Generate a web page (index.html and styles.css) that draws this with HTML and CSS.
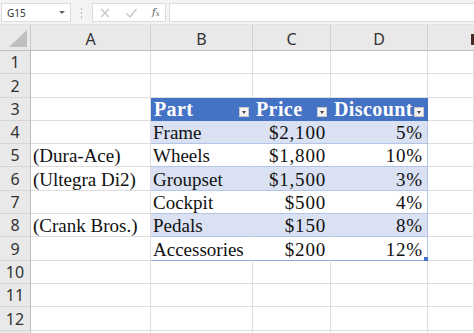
FILE: index.html
```html
<!DOCTYPE html>
<html>
<head>
<meta charset="utf-8">
<link rel="stylesheet" href="styles.css">
</head>
<body>
<div class="toolbar">
  <div class="namebox"><span class="nb-text">G15</span><span class="nb-arrow"></span></div>
  <div class="dots"><i></i><i></i><i></i></div>
  <div class="fbtns">
    <svg class="ico" width="12" height="12" viewBox="0 0 12 12"><path d="M2 2L10 10M10 2L2 10" stroke="#c4c4c4" stroke-width="1.3" fill="none"/></svg>
    <svg class="ico" width="13" height="12" viewBox="0 0 13 12"><path d="M1.5 6.5L5 10L11.5 2" stroke="#c4c4c4" stroke-width="1.3" fill="none"/></svg>
    <span class="fx">f<sub>x</sub></span>
  </div>
  <div class="formula"></div>
</div>
<div class="sheet">
  <div class="corner"><span class="tri"></span></div>
  <div class="ch">A</div><div class="ch">B</div><div class="ch">C</div><div class="ch">D</div><div class="ch ch-e"><span class="ecut"></span></div>

  <div class="rh">1</div><div class="c"></div><div class="c"></div><div class="c"></div><div class="c"></div><div class="c"></div>
  <div class="rh">2</div><div class="c"></div><div class="c"></div><div class="c"></div><div class="c"></div><div class="c"></div>

  <div class="rh">3</div><div class="c"></div>
  <div class="c th">Part<span class="flt"></span></div>
  <div class="c th">Price<span class="flt"></span></div>
  <div class="c th">Discount<span class="flt"></span></div>
  <div class="c"></div>

  <div class="rh">4</div><div class="c"></div>
  <div class="c t band">Frame</div><div class="c t band r">$2,100</div><div class="c t band r last">5%</div><div class="c"></div>

  <div class="rh">5</div><div class="c s">(Dura-Ace)</div>
  <div class="c t">Wheels</div><div class="c t r">$1,800</div><div class="c t r last">10%</div><div class="c"></div>

  <div class="rh">6</div><div class="c s">(Ultegra Di2)</div>
  <div class="c t band">Groupset</div><div class="c t band r">$1,500</div><div class="c t band r last">3%</div><div class="c"></div>

  <div class="rh">7</div><div class="c"></div>
  <div class="c t">Cockpit</div><div class="c t r">$500</div><div class="c t r last">4%</div><div class="c"></div>

  <div class="rh">8</div><div class="c s">(Crank Bros.)</div>
  <div class="c t band">Pedals</div><div class="c t band r">$150</div><div class="c t band r last">8%</div><div class="c"></div>

  <div class="rh">9</div><div class="c"></div>
  <div class="c t bottom">Accessories</div><div class="c t r bottom">$200</div><div class="c t r last bottom">12%<span class="handle"></span></div><div class="c"></div>

  <div class="rh">10</div><div class="c"></div><div class="c"></div><div class="c"></div><div class="c"></div><div class="c"></div>
  <div class="rh">11</div><div class="c"></div><div class="c"></div><div class="c"></div><div class="c"></div><div class="c"></div>
  <div class="rh">12</div><div class="c"></div><div class="c"></div><div class="c"></div><div class="c"></div><div class="c"></div>
  <div class="rh rh-end"></div><div class="c"></div><div class="c"></div><div class="c"></div><div class="c"></div><div class="c"></div>
</div>
</body>
</html>
```
FILE: styles.css
```css
* { box-sizing: border-box; }
html, body { margin: 0; padding: 0; }
body {
  width: 474px; height: 333px; overflow: hidden;
  background: #fff;
  font-family: "Noto Sans", "DejaVu Sans", sans-serif;
}
.toolbar {
  height: 25px;
  background: #f3f3f3;
  display: flex;
  align-items: flex-start;
  padding-top: 3px;
  padding-left: 1px;
  border-bottom: 1px solid #e2e2e2;
}
.namebox {
  width: 70px; height: 19px;
  background: #fff;
  border: 1px solid #dcdcdc;
  display: flex; align-items: center; justify-content: space-between;
  padding: 0 5px 0 5px;
  font-size: 10px; color: #333;
}
.nb-arrow {
  width: 0; height: 0;
  border-left: 3px solid transparent; border-right: 3px solid transparent;
  border-top: 3px solid #666;
}
.dots {
  width: 21px; height: 19px;
  display: flex; flex-direction: column; align-items: center; justify-content: center; gap: 2px;
}
.dots i { display: block; width: 1px; height: 2px; background: #b8b8b8; }
.fbtns {
  width: 74px; height: 19px;
  background: #fff;
  border: 1px solid #dcdcdc;
  display: flex; align-items: center;
  padding-left: 6px;
  gap: 14px;
}
.ico { display: block; }
.fx {
  font-family: "DejaVu Serif", serif; font-style: italic;
  font-size: 10px; color: #555; line-height: 1;
}
.fx sub { font-size: 7px; vertical-align: -1px; }
.formula {
  flex: 1; height: 19px; margin-left: 3px;
  background: #fff;
  border: 1px solid #dcdcdc;
  border-right: none;
}
.sheet {
  display: grid;
  grid-template-columns: 31px 120px 102px 78px 97px 1fr;
  grid-template-rows: 26px repeat(12, 23.3px) 10px;
  height: 308px;
  overflow: hidden;
}
.corner {
  background: #e9e9e9;
  border-right: 1px solid #c8c8c8;
  border-bottom: 1px solid #bdbdbd;
  position: relative;
}
.tri {
  position: absolute; right: 3px; bottom: 3px;
  width: 0; height: 0;
  border-left: 18px solid transparent;
  border-bottom: 17px solid #bfbfbf;
}
.ch {
  background: #e9e9e9;
  border-right: 1px solid #d0d0d0;
  border-bottom: 1px solid #bdbdbd;
  display: flex; align-items: center; justify-content: center;
  font-size: 16px; color: #333;
  padding-top: 2px;
  position: relative;
}
.ch-e { border-right: none; }
.ecut {
  position: absolute; left: 43px; top: 9px;
  width: 4px; height: 11px; background: #4a2c22;
}
.rh {
  background: #e9e9e9;
  border-right: 1px solid #bdbdbd;
  border-bottom: 1px solid #d6d6d6;
  display: flex; align-items: flex-end; justify-content: center;
  font-size: 16px; color: #333;
  line-height: 21px;
}
.c {
  border-right: 1px solid #dedede;
  border-bottom: 1px solid #dedede;
  font-family: "Liberation Serif", "Times New Roman", serif;
  font-size: 19px; color: #111;
  display: flex; align-items: flex-end;
  padding: 0 3px 0 2px;
  line-height: 21px;
  white-space: nowrap;
  position: relative;
}
.t {
  background: #fff;
  border-right-color: #fff;
  border-bottom: 1px solid #b4c6e7;
}
.t.last { border-right: 1px solid #b4c6e7; }
.band { background: #d9e1f2; border-right-color: #d9e1f2; }
.band.last { border-right-color: #b4c6e7; }
.r { justify-content: flex-end; padding-right: 4px; letter-spacing: 0.8px; }
.bottom { border-bottom-color: #8ea9db; }
.th {
  background: #4472c4;
  border-right-color: #4472c4;
  border-bottom: 1px solid #4472c4;
  color: #fff; font-weight: bold;
  font-size: 20px;
  letter-spacing: 0.4px;
  padding-left: 3px;
}
.flt {
  position: absolute; right: 3px; bottom: 3px;
  width: 10px; height: 10px;
  background: #f4f4f4;
  border: 1px solid #c9c9c9;
}
.flt::after {
  content: ""; position: absolute; left: 2px; top: 3px;
  width: 0; height: 0;
  border-left: 2.5px solid transparent; border-right: 2.5px solid transparent;
  border-top: 3px solid #444;
}
.handle {
  position: absolute; right: -1px; bottom: -1px;
  width: 4px; height: 4px; background: #4472c4;
}
```
